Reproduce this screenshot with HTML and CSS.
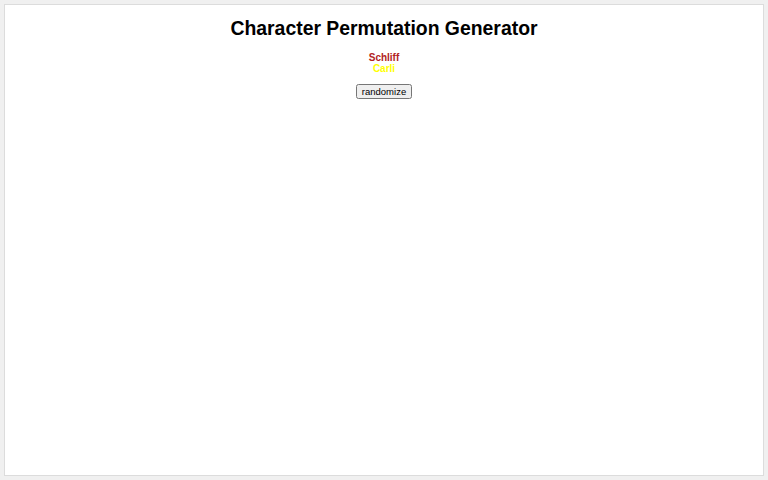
FILE: index.html
```html
<!DOCTYPE html>
<html lang="en">
<head>
    <meta charset="UTF-8">
    <title>Character Permutation Generator</title>
    <link rel="stylesheet" href="styles.css">
</head>
<body>
    <main class="card">
        <h1>Character Permutation Generator</h1>
        <div class="names">
            <p class="name red">Schliff</p>
            <p class="name yellow">Carli</p>
        </div>
        <button id="randomize">randomize</button>
    </main>
</body>
</html>
```

FILE: styles.css
```css
html, body {
    height: 100%;
}

body {
    margin: 0;
    padding: 4px;
    box-sizing: border-box;
    background-color: #f0f0f0;
    font-family: "Liberation Sans", Arial, sans-serif;
}

.card {
    height: 100%;
    box-sizing: border-box;
    background-color: #fff;
    border: 1px solid #dcdcdc;
    text-align: center;
    padding-top: 12px;
}

h1 {
    margin: 0;
    font-size: 19.4px;
    font-weight: bold;
    color: #000;
}

.names {
    margin-top: 12px;
}

.name {
    margin: 0;
    font-size: 10px;
    font-weight: bold;
    line-height: 11px;
}

.red {
    color: #b22222;
}

.yellow {
    color: #ffff00;
}

#randomize {
    margin-top: 10px;
    font-family: "Liberation Sans", Arial, sans-serif;
    font-size: 9.5px;
    padding: 0 4px;
}
```
